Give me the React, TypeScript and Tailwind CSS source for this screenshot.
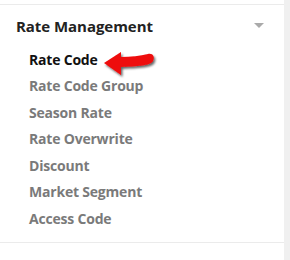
import React from "react";

const items = [
  "Rate Code Group",
  "Season Rate",
  "Rate Overwrite",
  "Discount",
  "Market Segment",
  "Access Code",
];

function RedArrow() {
  return (
    <svg width="60" height="34" viewBox="0 0 60 34" className="absolute left-[100px] top-[40px]">
      <defs>
        <filter id="sh" x="-20%" y="-30%" width="150%" height="170%">
          <feDropShadow dx="1.5" dy="2" stdDeviation="1.3" floodColor="#000" floodOpacity="0.6" />
        </filter>
      </defs>
      <path
        d="M4 18 L21 7 L21 12 C31 12 40 11 48 9 C53 8 55 12 53 16 C51 20 42 21 21 22 L21 30 Z"
        fill="#ee0a0a"
        filter="url(#sh)"
      />
    </svg>
  );
}

export default function App() {
  return (
    <div className="flex h-[260px] w-[290px] bg-white font-['Open_Sans',sans-serif]">
      <div className="w-[284px] pt-1">
        <div className="relative h-[239px] border-y border-[#ebebeb] bg-white">
          <div className="flex items-center justify-between pl-4 pr-[20px] pt-[10px]">
            <span className="text-[15px] font-bold tracking-[-0.05px] text-[#222]">Rate Management</span>
            <span className="mt-[-2px] h-0 w-0 border-x-[5px] border-t-[5px] border-x-transparent border-t-[#aaa]" />
          </div>
          <ul className="mt-[9px] pl-[29px]">
            <li className="h-[26.5px] text-[14px] font-bold leading-[26px] tracking-[-0.2px] text-[#111]">Rate Code</li>
            {items.map((t) => (
              <li key={t} className="h-[26.5px] text-[14px] font-bold leading-[26px] tracking-[-0.2px] text-[#7a7a7a]">
                {t}
              </li>
            ))}
          </ul>
          <RedArrow />
        </div>
      </div>
      <div className="w-[6px] bg-[#f0f0f0]" />
    </div>
  );
}
